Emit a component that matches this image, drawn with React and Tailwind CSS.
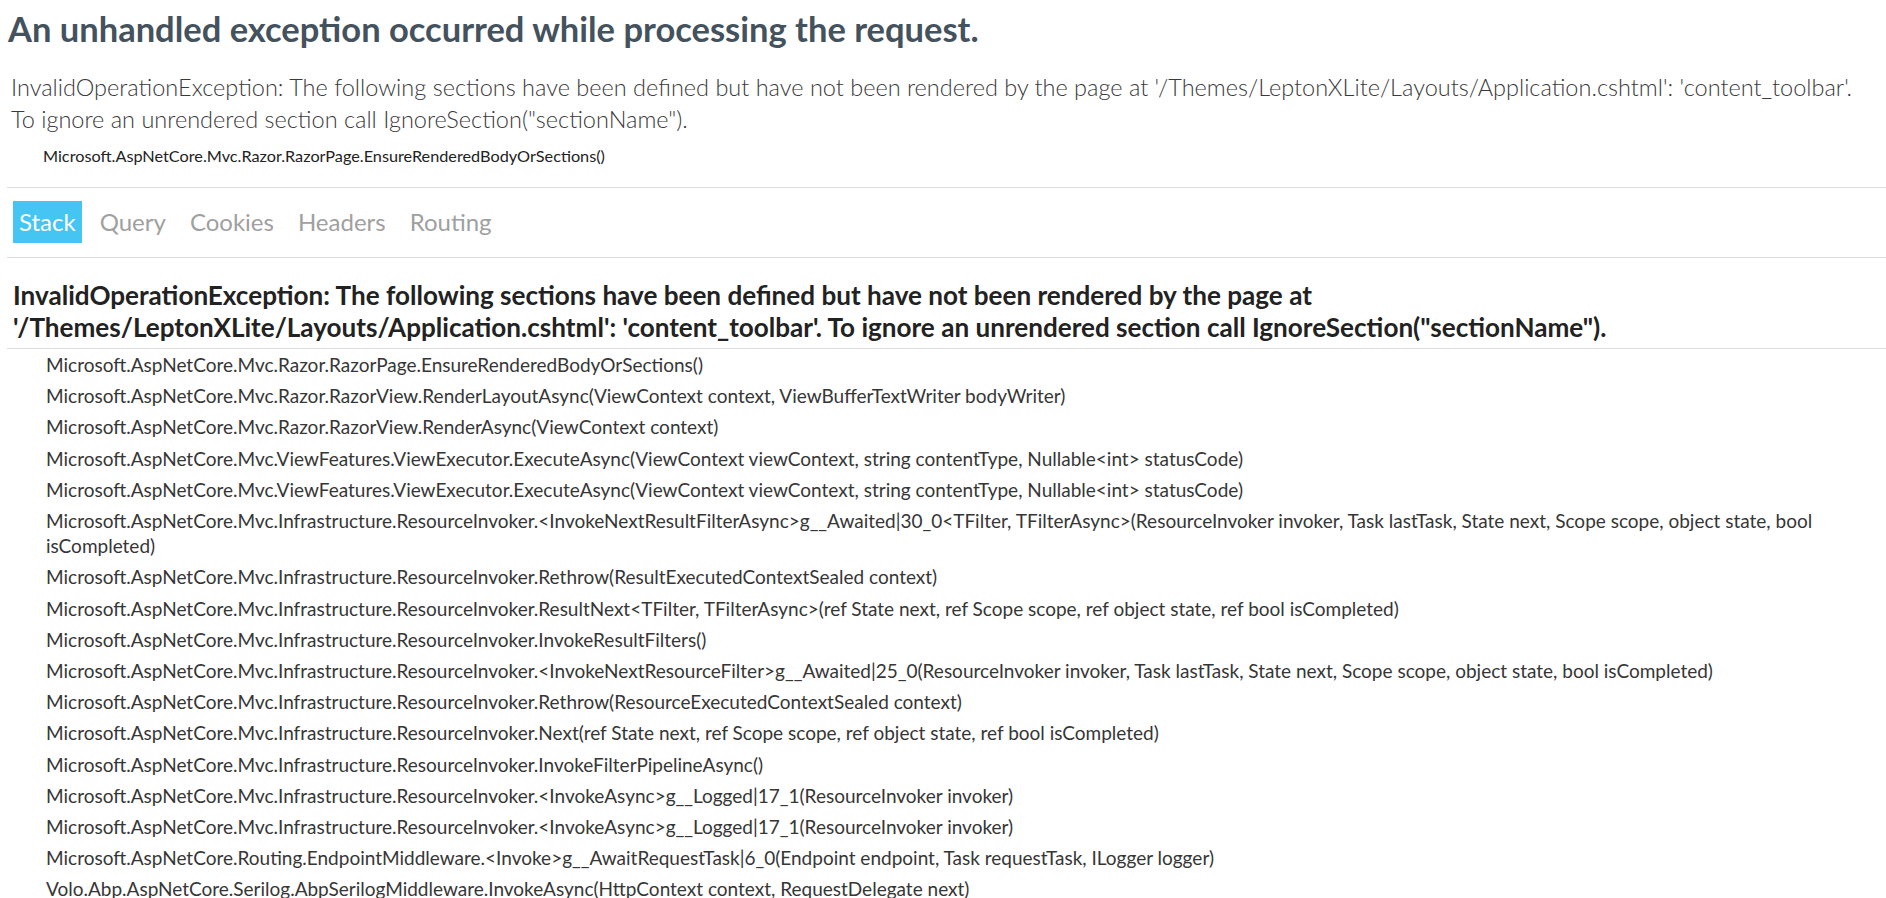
import React from "react";

const frames = [
  "Microsoft.AspNetCore.Mvc.Razor.RazorPage.EnsureRenderedBodyOrSections()",
  "Microsoft.AspNetCore.Mvc.Razor.RazorView.RenderLayoutAsync(ViewContext context, ViewBufferTextWriter bodyWriter)",
  "Microsoft.AspNetCore.Mvc.Razor.RazorView.RenderAsync(ViewContext context)",
  "Microsoft.AspNetCore.Mvc.ViewFeatures.ViewExecutor.ExecuteAsync(ViewContext viewContext, string contentType, Nullable<int> statusCode)",
  "Microsoft.AspNetCore.Mvc.ViewFeatures.ViewExecutor.ExecuteAsync(ViewContext viewContext, string contentType, Nullable<int> statusCode)",
  [
    "Microsoft.AspNetCore.Mvc.Infrastructure.ResourceInvoker.<InvokeNextResultFilterAsync>g__Awaited|30_0<TFilter, TFilterAsync>(ResourceInvoker invoker, Task lastTask, State next, Scope scope, object state, bool",
    "isCompleted)",
  ],
  "Microsoft.AspNetCore.Mvc.Infrastructure.ResourceInvoker.Rethrow(ResultExecutedContextSealed context)",
  "Microsoft.AspNetCore.Mvc.Infrastructure.ResourceInvoker.ResultNext<TFilter, TFilterAsync>(ref State next, ref Scope scope, ref object state, ref bool isCompleted)",
  "Microsoft.AspNetCore.Mvc.Infrastructure.ResourceInvoker.InvokeResultFilters()",
  "Microsoft.AspNetCore.Mvc.Infrastructure.ResourceInvoker.<InvokeNextResourceFilter>g__Awaited|25_0(ResourceInvoker invoker, Task lastTask, State next, Scope scope, object state, bool isCompleted)",
  "Microsoft.AspNetCore.Mvc.Infrastructure.ResourceInvoker.Rethrow(ResourceExecutedContextSealed context)",
  "Microsoft.AspNetCore.Mvc.Infrastructure.ResourceInvoker.Next(ref State next, ref Scope scope, ref object state, ref bool isCompleted)",
  "Microsoft.AspNetCore.Mvc.Infrastructure.ResourceInvoker.InvokeFilterPipelineAsync()",
  "Microsoft.AspNetCore.Mvc.Infrastructure.ResourceInvoker.<InvokeAsync>g__Logged|17_1(ResourceInvoker invoker)",
  "Microsoft.AspNetCore.Mvc.Infrastructure.ResourceInvoker.<InvokeAsync>g__Logged|17_1(ResourceInvoker invoker)",
  "Microsoft.AspNetCore.Routing.EndpointMiddleware.<Invoke>g__AwaitRequestTask|6_0(Endpoint endpoint, Task requestTask, ILogger logger)",
  "Volo.Abp.AspNetCore.Serilog.AbpSerilogMiddleware.InvokeAsync(HttpContext context, RequestDelegate next)",
];

const tabs = ["Stack", "Query", "Cookies", "Headers", "Routing"];

export default function App() {
  return (
    <div className="min-h-screen bg-white pl-[7px] pt-[9px] font-[Lato,sans-serif] text-[#222]">
      <h1 className="ml-[1px] whitespace-nowrap text-[34.5px] font-bold leading-[40px] text-[#44525e]">
        An unhandled exception occurred while processing the request.
      </h1>

      <div className="ml-[4px] mt-[22px] whitespace-nowrap text-[23.5px] font-light leading-[32px] text-[#3a3a3a]">
        InvalidOperationException: The following sections have been defined but have not been rendered by the page at '/Themes/LeptonXLite/Layouts/Application.cshtml': 'content_toolbar'.
        <br />
        To ignore an unrendered section call IgnoreSection("sectionName").
      </div>

      <div className="ml-[36px] mt-[10px] whitespace-nowrap text-[16.25px] leading-[22px] text-[#222]">
        Microsoft.AspNetCore.Mvc.Razor.RazorPage.EnsureRenderedBodyOrSections()
      </div>

      <ul className="mt-[20px] flex border-y border-[#ddd] pb-[14px] pl-[6px] pt-[13px]">
        {tabs.map((t, i) => (
          <li
            key={t}
            className={
              i === 0
                ? "mr-[12px] bg-[#44c5f2] px-[6px] py-[6px] text-[24px] leading-[30px] text-white"
                : "mr-[12px] px-[6px] py-[6px] text-[24px] leading-[30px] text-[#a0a0a0]"
            }
          >
            {t}
          </li>
        ))}
      </ul>

      <h2 className="whitespace-nowrap border-b border-[#ddd] pb-[5px] pl-[6px] pt-[21px] text-[26.1px] font-bold leading-[32px] text-[#222]">
        InvalidOperationException: The following sections have been defined but have not been rendered by the page at
        <br />
        '/Themes/LeptonXLite/Layouts/Application.cshtml': 'content_toolbar'. To ignore an unrendered section call IgnoreSection("sectionName").
      </h2>

      <ul className="ml-[39px]">
        {frames.map((f, i) => (
          <li key={i} className="whitespace-nowrap py-[3px] text-[19px] leading-[25.2px] text-[#363636]">
            {Array.isArray(f) ? (
              <>
                {f[0]}
                <br />
                {f[1]}
              </>
            ) : (
              f
            )}
          </li>
        ))}
      </ul>
    </div>
  );
}
